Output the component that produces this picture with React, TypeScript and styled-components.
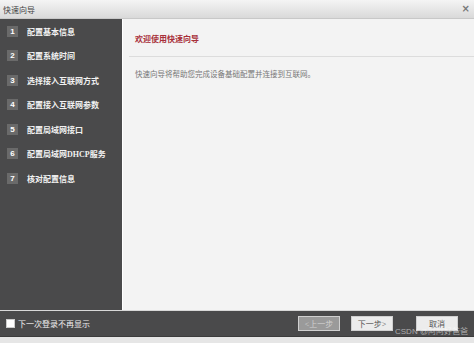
import React from "react";
import styled, { createGlobalStyle } from "styled-components";

const steps = [
  "配置基本信息",
  "配置系统时间",
  "选择接入互联网方式",
  "配置接入互联网参数",
  "配置局域网接口",
  "配置局域网DHCP服务",
  "核对配置信息",
];

const GlobalStyle = createGlobalStyle`
  body {
    margin: 0;
    background: #eaeaea;
    font-family: "Liberation Serif", "Noto Sans CJK SC", serif;
  }
`;

const App: React.FC = () => {
  return (
    <Wizard>
      <GlobalStyle />
      <TitleBar>
        <Title>快速向导</Title>
        <CloseBtn>×</CloseBtn>
      </TitleBar>
      <Main>
        <Sidebar>
          {steps.map((s, i) => (
            <Step key={s}>
              <StepNum>{i + 1}</StepNum>
              <StepText>{s}</StepText>
            </Step>
          ))}
        </Sidebar>
        <Content>
          <Heading>欢迎使用快速向导</Heading>
          <Divider />
          <Desc>快速向导将帮助您完成设备基础配置并连接到互联网。</Desc>
        </Content>
      </Main>
      <Footer>
        <CheckLabel>
          <CheckBox />
          下一次登录不再显示
        </CheckLabel>
        <Buttons>
          <Button disabled>&lt;上一步</Button>
          <Button>下一步&gt;</Button>
          <Button $wide>取消</Button>
        </Buttons>
        <Watermark>CSDN @阿阿好爸爸</Watermark>
      </Footer>
      <BottomBand />
    </Wizard>
  );
};

const Wizard = styled.div`
  width: 474px;
  height: 343px;
  display: flex;
  flex-direction: column;
  overflow: hidden;
`;

const TitleBar = styled.div`
  height: 19px;
  display: flex;
  align-items: center;
  justify-content: space-between;
  padding: 0 4px 0 3px;
  background: linear-gradient(#f4f4f4, #d9d9d9);
  border-bottom: 1px solid #c8c8c8;
  box-sizing: border-box;
`;

const Title = styled.span`
  font-size: 8px;
  color: #444;
`;

const CloseBtn = styled.span`
  font-family: "DejaVu Sans", sans-serif;
  font-size: 10px;
  color: #777;
  font-weight: bold;
  line-height: 1;
`;

const Main = styled.div`
  height: 291px;
  display: flex;
  border-bottom: 1px solid #d8d8d8;
`;

const Sidebar = styled.div`
  width: 122px;
  background: #4a4a4b;
  padding-top: 0;
`;

const Step = styled.div`
  height: 24.5px;
  display: flex;
  align-items: center;
  padding-left: 7px;
  gap: 9px;
`;

const StepNum = styled.span`
  width: 11px;
  height: 11px;
  background: #6a6a6a;
  color: #fff;
  font-family: "Liberation Sans", sans-serif;
  font-weight: bold;
  font-size: 8px;
  display: flex;
  align-items: center;
  justify-content: center;
`;

const StepText = styled.span`
  color: #f2f2f2;
  font-size: 8px;
  font-weight: bold;
`;

const Content = styled.div`
  flex: 1;
  background: #f3f3f3;
  border-left: 1px solid #ffffff;
  padding: 15px 0 0 6px;
`;

const Heading = styled.div`
  color: #a8303a;
  font-size: 8px;
  font-weight: bold;
  padding-left: 6px;
  height: 12px;
  line-height: 12px;
`;

const Divider = styled.div`
  height: 1px;
  background: #dcdcdc;
  margin-top: 10px;
`;

const Desc = styled.div`
  margin-top: 11px;
  padding-left: 6px;
  color: #777;
  font-size: 7.5px;
`;

const Footer = styled.div`
  position: relative;
  height: 26px;
  background: #4a4a4b;
  display: flex;
  align-items: center;
  justify-content: space-between;
  padding: 0 16px 0 6px;
  box-sizing: border-box;
  border-bottom: 1px solid #3c3c3c;
`;

const CheckLabel = styled.label`
  display: flex;
  align-items: center;
  gap: 3px;
  color: #f0f0f0;
  font-size: 8px;
`;

const CheckBox = styled.span`
  width: 7px;
  height: 7px;
  background: #fff;
  border: 1px solid #ccc;
`;

const Buttons = styled.div`
  display: flex;
  gap: 11px;
`;

const Button = styled.button<{ $wide?: boolean }>`
  width: 42px;
  height: 15px;
  margin-left: ${(p) => (p.$wide ? "12px" : "0")};
  padding: 0;
  border: 1px solid #d0d0d0;
  background: ${(p) => (p.disabled ? "#9a9a9a" : "#ececec")};
  color: ${(p) => (p.disabled ? "#d0d0d0" : "#555")};
  font-family: "Liberation Serif", "Noto Sans CJK SC", serif;
  font-size: 8px;
`;

const Watermark = styled.span`
  position: absolute;
  right: 6px;
  bottom: 0px;
  font-family: "Liberation Sans", "Noto Sans CJK SC", sans-serif;
  font-size: 8px;
  color: rgba(255, 255, 255, 0.55);
`;

const BottomBand = styled.div`
  flex: 1;
  background: #e6e6e6;
`;

export default App;
